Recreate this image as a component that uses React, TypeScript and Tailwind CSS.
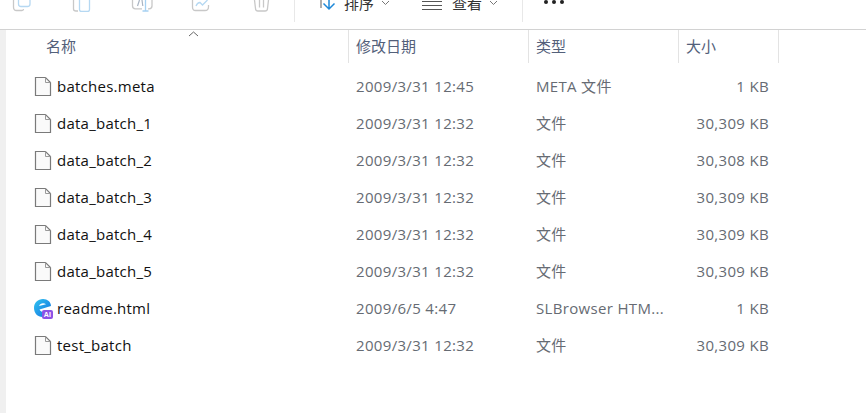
const font = { fontFamily: '"Open Sans","Noto Sans CJK SC",sans-serif' };

const files = [
  ["batches.meta", "2009/3/31 12:45", "META 文件", "1 KB"],
  ["data_batch_1", "2009/3/31 12:32", "文件", "30,309 KB"],
  ["data_batch_2", "2009/3/31 12:32", "文件", "30,308 KB"],
  ["data_batch_3", "2009/3/31 12:32", "文件", "30,309 KB"],
  ["data_batch_4", "2009/3/31 12:32", "文件", "30,309 KB"],
  ["data_batch_5", "2009/3/31 12:32", "文件", "30,309 KB"],
  ["readme.html", "2009/6/5 4:47", "SLBrowser HTM...", "1 KB"],
  ["test_batch", "2009/3/31 12:32", "文件", "30,309 KB"],
];

function FileIcon() {
  return (
    <svg width="18" height="21" viewBox="0 0 18 21" className="shrink-0">
      <path d="M1.5 1.5H11.5L16.5 6.5V19.5H1.5Z" fill="#fafafa" stroke="#7a7a7a" strokeWidth="1.2" />
      <path d="M11.5 1.5V6.5H16.5" fill="none" stroke="#9a9a9a" strokeWidth="1" />
    </svg>
  );
}

function BrowserIcon() {
  return (
    <svg width="20" height="21" viewBox="0 0 20 21" className="shrink-0">
      <defs>
        <linearGradient id="eg" x1="0" y1="0" x2="1" y2="1">
          <stop offset="0" stopColor="#2fc4f0" />
          <stop offset="1" stopColor="#1570e0" />
        </linearGradient>
      </defs>
      <path d="M1 10C1 4.5 5 1 10 1C14.5 1 18 4 18 8L6.5 11.5C7.5 13.5 9.5 14.5 12 14.2L15 17.5C13.5 18.4 11.5 19 9.5 19C4.5 19 1 15 1 10Z" fill="url(#eg)" />
      <path d="M6 8C6.8 6.2 8.2 5.2 10 5.2C11.2 5.2 12.2 5.6 13 6.3Z" fill="#fff" />
      <rect x="9" y="12" width="11" height="9" rx="2" fill="#8d52e6" />
      <text x="14.5" y="19" textAnchor="middle" fontSize="7" fontWeight="700" fill="#fff" fontFamily="Liberation Sans">AI</text>
    </svg>
  );
}

function ToolIcon({ children }: { children: React.ReactNode }) {
  return (
    <svg width="22" height="12" viewBox="0 0 22 12" fill="none" className="shrink-0 overflow-hidden">
      {children}
    </svg>
  );
}

function Chevron() {
  return (
    <svg width="9" height="6" viewBox="0 0 9 6" fill="none" className="shrink-0">
      <path d="M1 1L4.5 4.5L8 1" stroke="#777" strokeWidth="1" />
    </svg>
  );
}

function Toolbar() {
  return (
    <div className="h-[30px] border-b border-[#d2d2d2] flex overflow-hidden bg-white text-[#333] text-[15px]">
      <div className="flex items-start pl-[11px] gap-[38px] w-[294px] shrink-0">
        <ToolIcon>
          <path d="M2.5 0V7C2.5 9 3.5 10.5 5.5 10.5H11C12 10.5 12.5 10 12.5 9" stroke="#c8c8c8" strokeWidth="1.3" />
          <path d="M7.5 0V4C7.5 5.5 8.5 6.5 10 6.5H16.5C18 6.5 19 5.5 19 4V0" stroke="#b5d8f2" strokeWidth="1.3" />
        </ToolIcon>
        <ToolIcon>
          <path d="M2.5 0V9C2.5 10.5 3.5 11 5 11H7" stroke="#c8c8c8" strokeWidth="1.3" />
          <path d="M8.5 0V9.5C8.5 10.8 9.2 11.5 10.5 11.5H16.5C17.8 11.5 18.5 10.8 18.5 9.5V0" stroke="#b5d8f2" strokeWidth="1.3" />
        </ToolIcon>
        <ToolIcon>
          <path d="M1.5 0V6C1.5 8 2.5 8.8 4.5 8.8H11M21 0V6C21 8 20 8.8 18 8.8H17" stroke="#c8c8c8" strokeWidth="1.3" />
          <path d="M6.5 6L8.5 0M11 0L11.8 6" stroke="#a9b4c2" strokeWidth="1.2" />
          <path d="M11.5 11H17.5M14.5 0V11" stroke="#a6d1f2" strokeWidth="1.3" />
        </ToolIcon>
        <ToolIcon>
          <path d="M1.5 0V7C1.5 9 2.5 10.5 4.5 10.5H14C16 10.5 17.5 9 17.5 7V5" stroke="#c8c8c8" strokeWidth="1.3" />
          <path d="M5 6C6 3.5 7.5 2.5 9 2.5L11.5 5L16.5 0" stroke="#b5d8f2" strokeWidth="1.3" />
        </ToolIcon>
        <ToolIcon>
          <path d="M3.5 0L4.5 8.5C4.5 10 5.5 11 7 11H14C15.5 11 16.5 10 16.5 8.5L17.5 0" stroke="#c8c8c8" strokeWidth="1.3" />
          <path d="M8.5 0V7.5M12.5 0V7.5" stroke="#c8c8c8" strokeWidth="1.3" />
        </ToolIcon>
      </div>
      <div className="w-px h-[22px] bg-[#e8e8e8] shrink-0" />
      <div className="w-[227px] shrink-0 flex items-start pl-[21px] -mt-[7px]">
        <svg width="20" height="18" viewBox="0 0 20 18" fill="none" className="shrink-0">
          <path d="M5 0V15" stroke="#777" strokeWidth="1.2" />
          <path d="M13 0V15.5M7.5 10.5L13 16L18.5 10.5" stroke="#1e88d8" strokeWidth="1.5" />
        </svg>
        <span className="ml-[8px] leading-[20px] w-[31px] shrink-0">排序</span>
        <div className="ml-[6px] mt-[7px]"><Chevron /></div>
        <div className="ml-[32px] mt-[8px] w-[20px] shrink-0 flex flex-col gap-[3px]">
          <div className="h-px bg-[#555]" />
          <div className="h-px bg-[#555]" />
          <div className="h-px bg-[#555]" />
        </div>
        <span className="ml-[10px] leading-[20px] w-[31px] shrink-0">查看</span>
        <div className="ml-[6px] mt-[7px]"><Chevron /></div>
      </div>
      <div className="w-px h-[22px] bg-[#e8e8e8] shrink-0" />
      <div className="pl-[21px] flex items-start gap-[4px]">
        <div className="size-[4px] rounded-full bg-[#222]" />
        <div className="size-[4px] rounded-full bg-[#222]" />
        <div className="size-[4px] rounded-full bg-[#222]" />
      </div>
    </div>
  );
}

function Header() {
  const cell = "h-full flex items-center pl-[7px] pb-[2px] border-l border-[#e3e3e3] shrink-0";
  return (
    <div className="relative h-[33px] flex text-[15px] text-[#53607a] leading-[20px]">
      <div className="w-[342px] shrink-0 flex items-center pl-[40px] pb-[2px]">名称</div>
      <svg width="11" height="6" viewBox="0 0 11 6" fill="none" className="absolute left-[182px] top-[1px]">
        <path d="M1 5L5.5 1L10 5" stroke="#666" strokeWidth="1" />
      </svg>
      <div className={`${cell} w-[180px]`}>修改日期</div>
      <div className={`${cell} w-[150px]`}>类型</div>
      <div className={`${cell} w-[101px] border-r`}>大小</div>
    </div>
  );
}

export default function App() {
  return (
    <div className="w-[866px] h-[413px] overflow-hidden bg-white flex flex-col" style={font}>
      <Toolbar />
      <div className="flex flex-1 min-h-0">
        <div className="w-[6px] shrink-0 bg-[#f0f0f0]" />
        <div className="flex-1 min-w-0">
          <Header />
          <div className="pt-[5px]">
            {files.map(([name, date, type, size]) => (
              <div key={name} className="h-[37px] flex items-center text-[15px] tracking-[0.33px] text-[#666b73]">
                <div className="w-[343px] shrink-0 flex items-center pl-[27px] gap-[4px] text-[#111] tracking-[0.25px]">
                  <div className="w-[20px] flex justify-center shrink-0">
                    {name === "readme.html" ? <BrowserIcon /> : <FileIcon />}
                  </div>
                  <span>{name}</span>
                </div>
                <div className="w-[180px] shrink-0 pl-[7px]">{date}</div>
                <div className="w-[150px] shrink-0 pl-[7px] whitespace-nowrap">{type}</div>
                <div className="w-[90px] shrink-0 text-right whitespace-nowrap">{size}</div>
              </div>
            ))}
          </div>
        </div>
      </div>
    </div>
  );
}
